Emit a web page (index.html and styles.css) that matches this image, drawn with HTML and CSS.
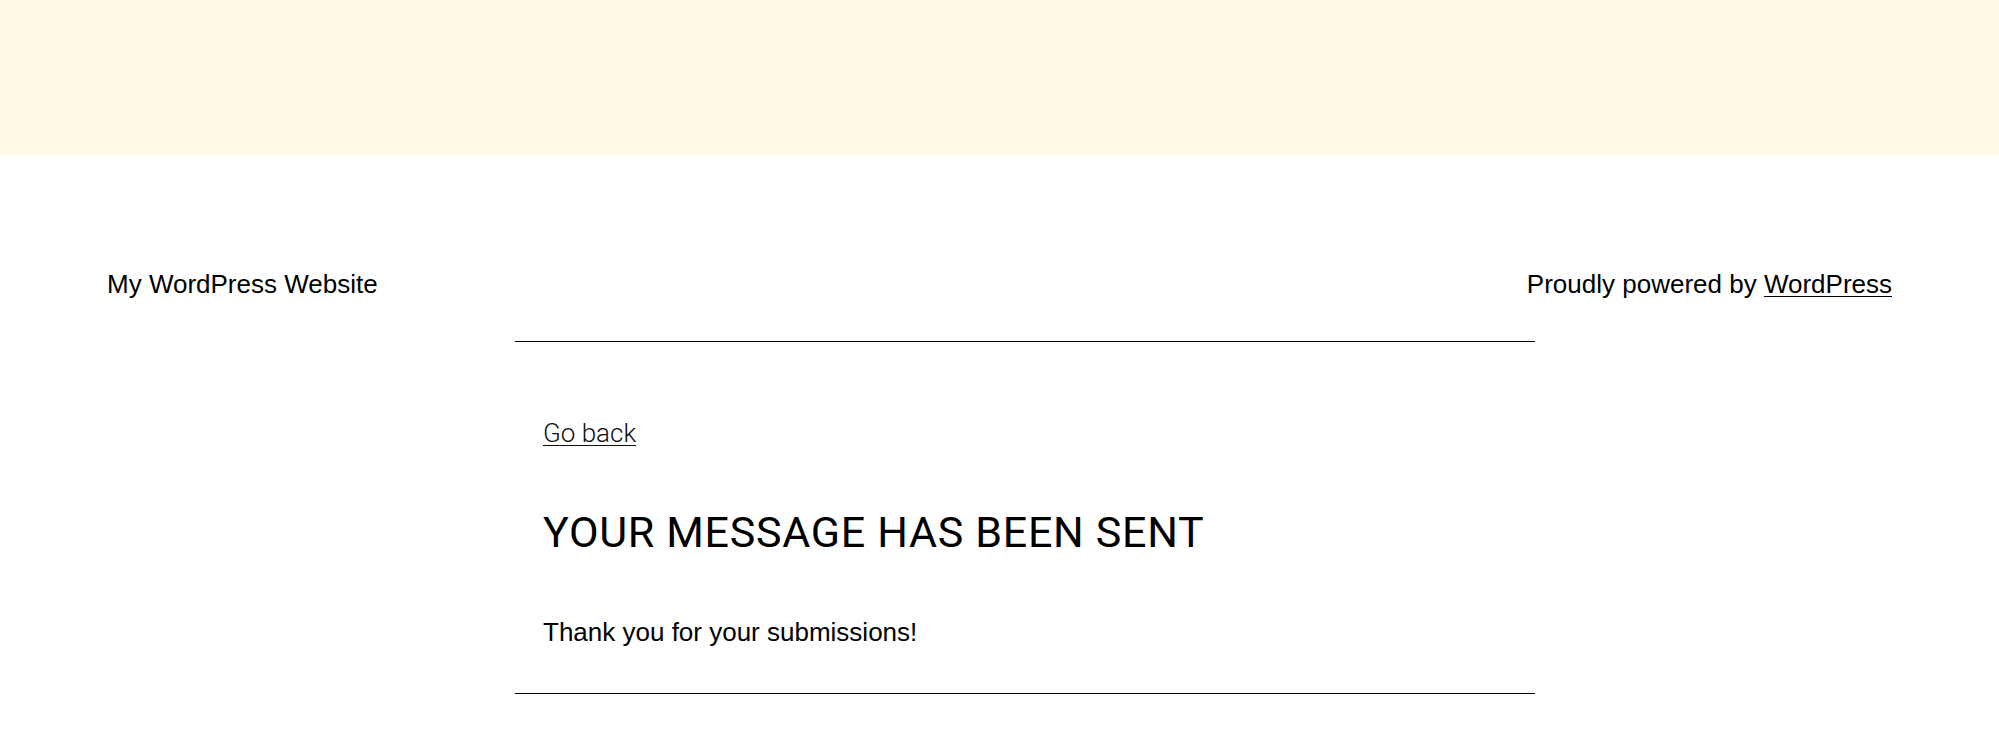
FILE: index.html
```html
<!DOCTYPE html>
<html lang="en">
<head>
<meta charset="utf-8">
<title>Your message has been sent</title>
<link rel="stylesheet" href="styles.css">
</head>
<body>
<div class="banner"></div>
<header class="site-header">
  <span class="site-title">My WordPress Website</span>
  <span class="credit">Proudly powered by <a href="#" class="credit-link">WordPress</a></span>
</header>
<main class="content">
  <div class="inner">
    <a href="#" class="back-link">Go back</a>
    <h1 class="title">YOUR MESSAGE HAS BEEN SENT</h1>
    <p class="message">Thank you for your submissions!</p>
  </div>
</main>
</body>
</html>
```
FILE: styles.css
```css
html, body {
  margin: 0;
  padding: 0;
  background: #ffffff;
  color: #000000;
}
body {
  font-family: "Liberation Sans", Arial, sans-serif;
  font-size: 26px;
  line-height: 36px;
}
.banner {
  height: 156px;
  background: #fffbe6;
}
.site-header {
  display: flex;
  justify-content: space-between;
  padding: 110px 107px 0;
  line-height: 36px;
}
.credit-link {
  color: #000000;
  text-decoration: underline;
  text-underline-offset: 3px;
  text-decoration-thickness: 1px;
}
.content {
  margin: 39px 0 0 515px;
  width: 1020px;
  border-top: 1px solid #000000;
  border-bottom: 1px solid #000000;
}
.inner {
  display: flex;
  flex-direction: column;
  align-items: flex-start;
  padding: 73px 28px 43px;
}
.back-link {
  font-family: Roboto, "Liberation Sans", sans-serif;
  font-weight: 300;
  font-size: 26px;
  line-height: 36px;
  color: #111111;
  text-decoration: underline;
  text-underline-offset: 3px;
  text-decoration-thickness: 1px;
}
.title {
  margin: 55px 0 0;
  font-family: Roboto, "Liberation Sans", sans-serif;
  font-weight: 400;
  font-size: 43px;
  line-height: 52px;
  letter-spacing: 0.7px;
}
.message {
  margin: 56px 0 0;
  font-size: 26px;
  line-height: 36px;
}
```
